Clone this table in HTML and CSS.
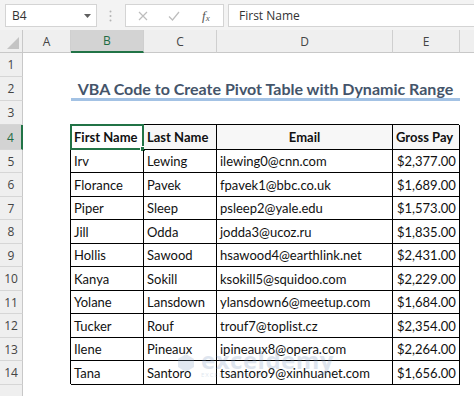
FILE: index.html
```html
<!DOCTYPE html>
<html lang="en">
<head>
<meta charset="utf-8">
<title>VBA Code to Create Pivot Table with Dynamic Range</title>
<link rel="stylesheet" href="styles.css">
</head>
<body>
<div class="app">
  <div class="fbar">
    <div class="namebox">
      <span class="ref">B4</span>
      <svg class="caret" width="7" height="4" viewBox="0 0 7 4"><path d="M0 0H7L3.5 4Z" fill="#5f5f5f"/></svg>
    </div>
    <svg class="grip" width="3" height="12" viewBox="0 0 3 12"><circle cx="1.5" cy="1.5" r="1" fill="#b3b3b3"/><circle cx="1.5" cy="6" r="1" fill="#b3b3b3"/><circle cx="1.5" cy="10.5" r="1" fill="#b3b3b3"/></svg>
    <div class="fbtns">
      <svg class="ico" width="10" height="10" viewBox="0 0 10 10"><path d="M1 1L9 9M9 1L1 9" stroke="#bdbdbd" stroke-width="1.2" fill="none"/></svg>
      <svg class="ico" width="12" height="10" viewBox="0 0 12 10"><path d="M1 5.5L4.5 9L11 1" stroke="#bdbdbd" stroke-width="1.2" fill="none"/></svg>
      <span class="fx">f<sub>x</sub></span>
    </div>
    <div class="finput">First Name</div>
  </div>

  <div class="sheet">
    <div class="corner"><svg width="12" height="12" viewBox="0 0 12 12"><path d="M12 0V12H0Z" fill="#c4c4c4"/></svg></div>
    <div class="ch">A</div>
    <div class="ch sel">B</div>
    <div class="ch">C</div>
    <div class="ch">D</div>
    <div class="ch">E</div>
    <div class="ch last"></div>

    <div class="rh r1">1</div>
    <div class="rh r2">2</div>
    <div class="rh r3">3</div>
    <div class="rh r4 sel">4</div>
    <div class="rh r5">5</div>
    <div class="rh r6">6</div>
    <div class="rh r7">7</div>
    <div class="rh r8">8</div>
    <div class="rh r9">9</div>
    <div class="rh r10">10</div>
    <div class="rh r11">11</div>
    <div class="rh r12">12</div>
    <div class="rh r13">13</div>
    <div class="rh r14">14</div>
    <div class="rh r15"></div>

    <div class="title"><span>VBA Code to Create Pivot Table with Dynamic Range</span></div>

    <div class="table">
      <div class="c hd active">First Name<span class="selbox"><span class="handle"></span></span></div>
      <div class="c hd">Last Name</div>
      <div class="c hd ctr">Email</div>
      <div class="c hd">Gross Pay</div>

      <div class="c">Irv</div><div class="c">Lewing</div><div class="c">ilewing0@cnn.com</div><div class="c money"><span>$</span><span>2,377.00</span></div>
      <div class="c">Florance</div><div class="c">Pavek</div><div class="c">fpavek1@bbc.co.uk</div><div class="c money"><span>$</span><span>1,689.00</span></div>
      <div class="c">Piper</div><div class="c">Sleep</div><div class="c">psleep2@yale.edu</div><div class="c money"><span>$</span><span>1,573.00</span></div>
      <div class="c">Jill</div><div class="c">Odda</div><div class="c">jodda3@ucoz.ru</div><div class="c money"><span>$</span><span>1,835.00</span></div>
      <div class="c">Hollis</div><div class="c">Sawood</div><div class="c">hsawood4@earthlink.net</div><div class="c money"><span>$</span><span>2,431.00</span></div>
      <div class="c">Kanya</div><div class="c">Sokill</div><div class="c">ksokill5@squidoo.com</div><div class="c money"><span>$</span><span>2,229.00</span></div>
      <div class="c">Yolane</div><div class="c">Lansdown</div><div class="c">ylansdown6@meetup.com</div><div class="c money"><span>$</span><span>1,684.00</span></div>
      <div class="c">Tucker</div><div class="c">Rouf</div><div class="c">trouf7@toplist.cz</div><div class="c money"><span>$</span><span>2,354.00</span></div>
      <div class="c">Ilene</div><div class="c">Pineaux</div><div class="c">ipineaux8@opera.com</div><div class="c money"><span>$</span><span>2,264.00</span></div>
      <div class="c">Tana</div><div class="c">Santoro</div><div class="c">tsantoro9@xinhuanet.com</div><div class="c money"><span>$</span><span>1,656.00</span></div>
    </div>

    <div class="watermark">
      <svg width="20" height="20" viewBox="0 0 20 20"><path d="M10 1L18 6V14L10 19L2 14V6Z" fill="#8aa6c8"/></svg>
      <div class="wm-text"><span class="wm-big">exceldemy</span><span class="wm-small">EXCEL · DATA · BI</span></div>
    </div>
  </div>
</div>
</body>
</html>
```

FILE: styles.css
```css
* { box-sizing: border-box; }
html, body { margin: 0; padding: 0; }
body {
  width: 474px;
  height: 396px;
  overflow: hidden;
  background: #ffffff;
  font-family: Lato, "Liberation Sans", sans-serif;
  color: #000;
}
.app { width: 474px; height: 396px; display: flex; flex-direction: column; overflow: hidden; }

/* formula bar */
.fbar {
  height: 30px;
  flex: none;
  background: #f3f3f3;
  display: flex;
  align-items: flex-start;
  padding: 4px 0 0 5px;
}
.namebox {
  width: 92px;
  height: 23px;
  background: #fff;
  border: 1px solid #d4d4d4;
  display: flex;
  align-items: center;
  justify-content: space-between;
  padding: 0 5px 0 6px;
  font-family: "Open Sans", "Liberation Sans", sans-serif;
  font-size: 12px;
  color: #333;
}
.grip { margin: 6px 0 0 12px; }
.fbtns {
  margin-left: 13px;
  width: 99px;
  height: 23px;
  background: #fff;
  border: 1px solid #d4d4d4;
  display: flex;
  align-items: center;
  padding: 0 0 0 12px;
  gap: 20px;
}
.fx {
  font-family: "Liberation Serif", serif;
  font-style: italic;
  font-size: 13px;
  color: #555;
  margin-left: 2px;
}
.fx sub { font-size: 9px; vertical-align: -1px; }
.finput {
  margin-left: 4px;
  flex: 1;
  height: 23px;
  background: #fff;
  border: 1px solid #d4d4d4;
  border-right: none;
  display: flex;
  align-items: center;
  padding-left: 10px;
  font-family: "Open Sans", "Liberation Sans", sans-serif;
  font-size: 12px;
  color: #333;
}

/* sheet grid */
.sheet {
  position: relative;
  flex: 1;
  display: grid;
  grid-template-columns: 23px 48px 73px 73px 176px 67px 1fr;
  grid-template-rows: 23px 24px 24px 24px 25px 23px 24px 23px 24px 23px 24px 23px 24px 23px 24px 24px;
  background: #fff;
}
.corner {
  grid-row: 1; grid-column: 1;
  background: #efefef;
  border-right: 1px solid #c8c8c8;
  border-bottom: 1px solid #c8c8c8;
  display: flex; align-items: flex-end; justify-content: flex-end;
  padding: 0 3px 3px 0;
}
.ch {
  grid-row: 1;
  background: #efefef;
  border-right: 1px solid #cfcfcf;
  border-bottom: 1px solid #c8c8c8;
  display: flex; align-items: center; justify-content: center;
  font-family: "Open Sans", "Liberation Sans", sans-serif;
  font-size: 12px;
  color: #444;
}
.ch.last { border-right: none; }
.ch.sel {
  background: #d3d3d3;
  color: #1f6b43;
  border-bottom: 2px solid #217346;
}
.rh {
  grid-column: 1;
  background: #efefef;
  border-right: 1px solid #c8c8c8;
  border-bottom: 1px solid #d6d6d6;
  display: flex; align-items: center; justify-content: center;
  font-family: "Open Sans", "Liberation Sans", sans-serif;
  font-size: 12px;
  color: #444;
}
.rh.sel {
  background: #d3d3d3;
  color: #1f6b43;
  border-right: 2px solid #217346;
}
.r1 { grid-row: 2; } .r2 { grid-row: 3; } .r3 { grid-row: 4; } .r4 { grid-row: 5; }
.r5 { grid-row: 6; } .r6 { grid-row: 7; } .r7 { grid-row: 8; } .r8 { grid-row: 9; }
.r9 { grid-row: 10; } .r10 { grid-row: 11; } .r11 { grid-row: 12; } .r12 { grid-row: 13; }
.r13 { grid-row: 14; } .r14 { grid-row: 15; } .r15 { grid-row: 16; }

.title {
  grid-row: 3;
  grid-column: 3 / 7;
  border-bottom: 3px solid #a3c2e4;
  display: flex; align-items: center; justify-content: center;
  font-family: Lato, "Liberation Sans", sans-serif;
  font-weight: 700;
  font-size: 16px;
  white-space: nowrap;
  color: #44546a;
  padding-top: 1px;
}

.table {
  grid-row: 5 / 16;
  grid-column: 3 / 7;
  display: grid;
  grid-template-columns: 73px 73px 176px 67px;
  grid-template-rows: 25px 23px 24px 23px 24px 23px 24px 23px 24px 23px 24px;
  box-shadow: -1px -1px 0 #000;
  border-right: 1px solid #7a7a7a;
}
.c {
  position: relative;
  border-right: 1px solid #000;
  border-bottom: 1px solid #000;
  display: flex; align-items: center;
  padding: 0 3px 0 3px;
  font-family: Lato, "Liberation Sans", sans-serif;
  font-size: 13px;
  color: #111;
  white-space: nowrap;
  overflow: hidden;
}
.c.hd { font-weight: 700; background: #f7f7f7; }
.c.ctr { justify-content: center; }
.c.money { justify-content: space-between; padding: 0 4px 0 4px; }
.c.active { overflow: visible; background: #fff; }
.selbox {
  position: absolute;
  left: -1px; top: -1px; right: -1px; bottom: -1px;
  border: 2px solid #217346;
  pointer-events: none;
}
.handle {
  position: absolute;
  right: -4px; bottom: -4px;
  width: 6px; height: 6px;
  background: #217346;
  border: 1px solid #fff;
}

.watermark {
  position: absolute;
  left: 176px;
  top: 318px;
  display: flex;
  align-items: center;
  gap: 5px;
  opacity: 0.25;
  pointer-events: none;
}
.wm-text { display: flex; flex-direction: column; line-height: 1; }
.wm-big { font-family: "Open Sans", sans-serif; font-size: 24px; font-weight: 700; color: #7f9cc2; letter-spacing: 0.5px; }
.wm-small { font-family: "Open Sans", sans-serif; font-size: 6px; color: #7f9cc2; letter-spacing: 1px; }
```
